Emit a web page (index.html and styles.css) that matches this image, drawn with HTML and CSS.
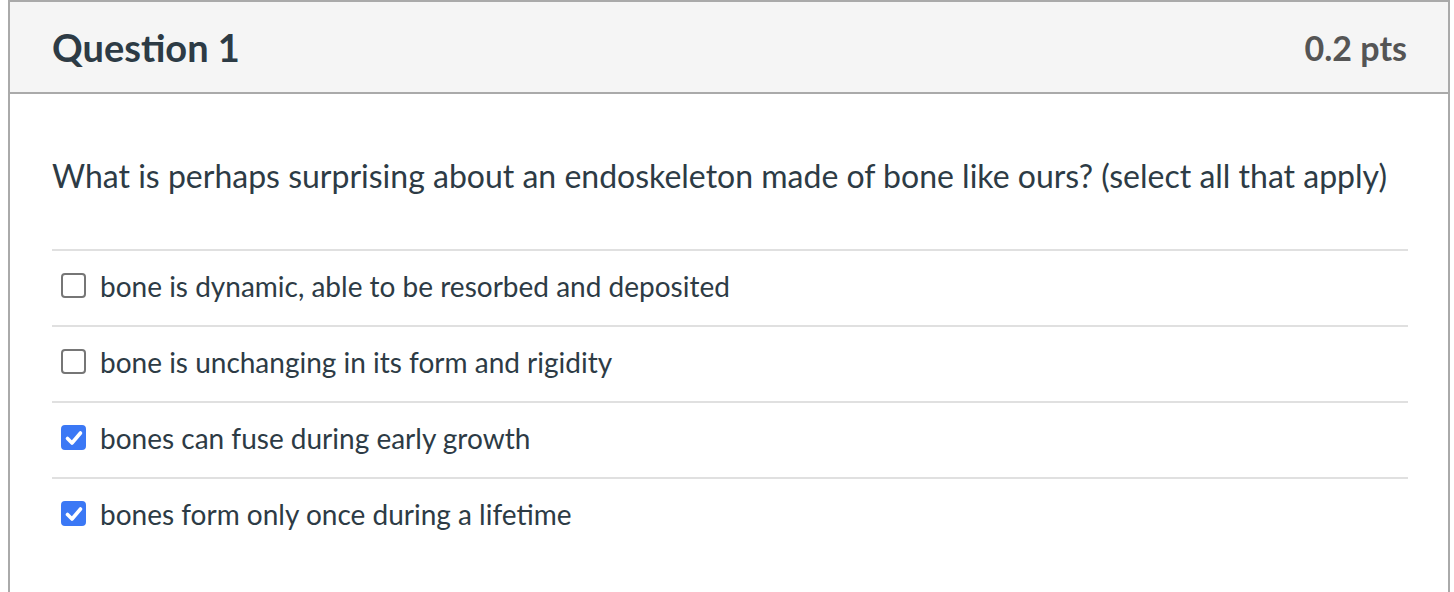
FILE: index.html
```html
<!DOCTYPE html>
<html>
<head>
<meta charset="utf-8">
<link rel="stylesheet" href="styles.css">
</head>
<body>
<div class="question">
  <div class="question-header">
    <h2 class="question-title">Question 1</h2>
    <span class="question-points">0.2 pts</span>
  </div>
  <div class="question-body">
    <p class="question-text">What is perhaps surprising about an endoskeleton made of bone like ours? (select all that apply)</p>
    <div class="answers">
      <label class="answer"><span class="box"></span><span class="answer-text">bone is dynamic, able to be resorbed and deposited</span></label>
      <label class="answer"><span class="box"></span><span class="answer-text">bone is unchanging in its form and rigidity</span></label>
      <label class="answer"><span class="box checked"><svg viewBox="0 0 24 24" width="24" height="24"><path d="M5.5 12.5 L10 17 L18.5 7" fill="none" stroke="#fff" stroke-width="3.6" stroke-linecap="round" stroke-linejoin="round"/></svg></span><span class="answer-text">bones can fuse during early growth</span></label>
      <label class="answer"><span class="box checked"><svg viewBox="0 0 24 24" width="24" height="24"><path d="M5.5 12.5 L10 17 L18.5 7" fill="none" stroke="#fff" stroke-width="3.6" stroke-linecap="round" stroke-linejoin="round"/></svg></span><span class="answer-text">bones form only once during a lifetime</span></label>
    </div>
  </div>
</div>
</body>
</html>
```

FILE: styles.css
```css
* { box-sizing: border-box; }
html, body { background: #fff; }
body {
  margin: 0 4px 0 8px;
  font-family: Lato, "Noto Sans", "Liberation Sans", sans-serif;
  color: #2d3b45;
}
.question {
  border: 2px solid #aaaaaa;
  height: 600px;
}
.question-header {
  display: flex;
  justify-content: space-between;
  align-items: center;
  height: 92px;
  padding: 0 41px 0 42px;
  background: #f5f5f5;
  border-bottom: 2px solid #aaaaaa;
}
.question-title {
  margin: 0;
  font-size: 38px;
  font-weight: 700;
  color: #2d3b45;
}
.question-points {
  font-size: 34px;
  font-weight: 700;
  color: #555555;
}
.question-body {
  padding: 0 40px 0 42px;
}
.question-text {
  margin: 62px 0 53px;
  font-size: 32px;
  line-height: 40px;
}
.answer {
  display: flex;
  align-items: center;
  gap: 14px;
  height: 76px;
  border-top: 2px solid #e0e0e0;
  padding-left: 9px;
  padding-bottom: 5px;
}
.box {
  width: 25px;
  height: 25px;
  border: 2px solid #767676;
  border-radius: 4px;
  flex: none;
  display: flex;
  align-items: center;
  justify-content: center;
}
.box.checked {
  background: #3b78f5;
  border-color: #3b78f5;
}
.box svg { display: block; flex: none; }
.answer-text {
  font-size: 28px;
  line-height: 34px;
}
```
